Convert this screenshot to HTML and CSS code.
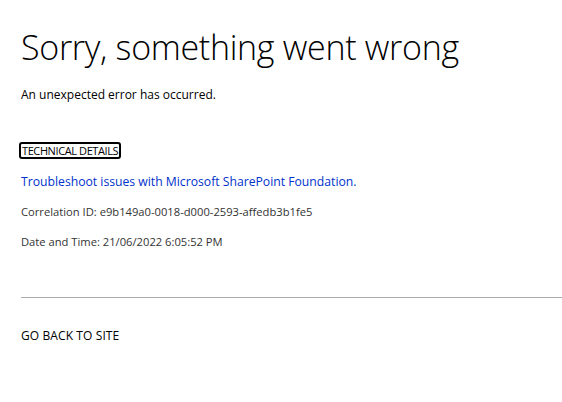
FILE: index.html
```html
<!DOCTYPE html>
<html>
<head>
<meta charset="utf-8">
<link rel="stylesheet" href="styles.css">
</head>
<body>
<main class="page">
  <h1 class="title">Sorry, something went wrong</h1>
  <p class="message">An unexpected error has occurred.</p>
  <div class="details">
    <button class="details-toggle">TECHNICAL DETAILS</button>
    <a class="help-link" href="#">Troubleshoot issues with Microsoft SharePoint Foundation.</a>
    <p class="meta">Correlation ID: e9b149a0-0018-d000-2593-affedb3b1fe5</p>
    <p class="meta">Date and Time: 21/06/2022 6:05:52 PM</p>
  </div>
  <hr class="divider">
  <a class="back" href="#">GO BACK TO SITE</a>
</main>
</body>
</html>
```
FILE: styles.css
```css
html, body {
  margin: 0;
  padding: 0;
  background: #fff;
}
body {
  font-family: "Open Sans", "Noto Sans", sans-serif;
  color: #000;
}
.page {
  padding: 22px 0 0 21px;
  display: flex;
  flex-direction: column;
  align-items: flex-start;
}
.title {
  margin: 0;
  font-weight: 300;
  font-size: 34px;
  line-height: 50px;
  letter-spacing: -0.3px;
  color: #000;
}
.message {
  margin: 14px 0 0;
  font-size: 12px;
  line-height: 18px;
  color: #000;
}
.details {
  margin-top: 38px;
  display: flex;
  flex-direction: column;
  align-items: flex-start;
}
.details-toggle {
  margin-left: -2px;
  font-family: inherit;
  font-size: 11px;
  line-height: 13px;
  padding: 0 1px;
  border: 2px solid #000;
  border-radius: 3px;
  background: #fff;
  color: #000;
  letter-spacing: -0.4px;
}
.help-link {
  margin-top: 14px;
  font-size: 12.2px;
  line-height: 18px;
  color: #0033cc;
  text-decoration: none;
}
.meta {
  margin: 12px 0 0;
  font-size: 11.2px;
  line-height: 18px;
  color: #333;
}
.divider {
  align-self: stretch;
  margin: 46px 0 0;
  border: 0;
  border-top: 1px solid #ababab;
}
.back {
  margin-top: 30px;
  font-size: 12px;
  line-height: 16px;
  color: #000;
  text-decoration: none;
  letter-spacing: 0.1px;
}
```
